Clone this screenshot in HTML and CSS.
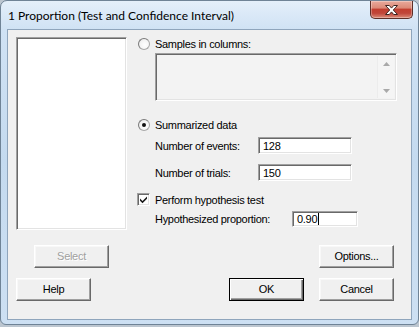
FILE: index.html
```html
<!DOCTYPE html>
<html>
<head>
<meta charset="utf-8">
<link rel="stylesheet" href="styles.css">
</head>
<body>
<div class="window">
  <div class="titlebar">
    <span class="title">1 Proportion (Test and Confidence Interval)</span>
    <div class="close">
      <svg width="17" height="12" viewBox="0 0 17 12"><path d="M2.5 1.5h3.8l2.2 2.6 2.2-2.6h3.8l-4.2 4.5 4.2 4.5h-3.8l-2.2-2.6-2.2 2.6h-3.8l4.2-4.5z" fill="#fff" stroke="#3e2420" stroke-width="1" stroke-linejoin="round"/></svg>
    </div>
  </div>
  <div class="client">
    <div class="main">
      <div class="listbox"></div>
      <div class="options">
        <div class="radio-row"><span class="radio"></span><span>Samples in columns:</span></div>
        <div class="columns-box">
          <div class="scroll">
            <svg class="arrow" width="7" height="4" viewBox="0 0 7 4"><path d="M0 4L3.5 0L7 4z" fill="#a9a9a9"/></svg>
            <svg class="arrow" width="7" height="4" viewBox="0 0 7 4"><path d="M0 0L3.5 4L7 0z" fill="#a9a9a9"/></svg>
          </div>
        </div>
        <div class="radio-row summarized"><span class="radio checked"></span><span>Summarized data</span></div>
        <div class="field-row events"><span class="label w-events">Number of events:</span><span class="input w-num">128</span></div>
        <div class="field-row trials"><span class="label w-events">Number of trials:</span><span class="input w-num">150</span></div>
        <div class="check-row"><span class="checkbox"><svg width="9" height="9" viewBox="0 0 9 9"><path d="M1 3.5L3.5 6L8 1.5V3.8L3.5 8.3L1 5.8z" fill="#1a1a1a"/></svg></span><span>Perform hypothesis test</span></div>
        <div class="field-row hyp"><span class="label w-hyp">Hypothesized proportion:</span><span class="input w-prop">0.90<span class="caret"></span></span></div>
      </div>
    </div>
    <div class="btn-row first">
      <div class="btn disabled">Select</div>
      <div class="btn">Options...</div>
    </div>
    <div class="btn-row second">
      <div class="btn">Help</div>
      <div class="btn default push">OK</div>
      <div class="btn gap">Cancel</div>
    </div>
  </div>
</div>
</body>
</html>
```
FILE: styles.css
```css
html, body {
  margin: 0;
  padding: 0;
}
body {
  width: 419px;
  height: 327px;
  overflow: hidden;
  background: #bcc6d0;
  font-family: "Liberation Sans", Arial, sans-serif;
  font-size: 11px;
  letter-spacing: -0.3px;
  color: #000;
}
.window {
  box-sizing: border-box;
  width: 419px;
  height: 325px;
  border: 1px solid #6f8396;
  border-radius: 7px 7px 6px 6px;
  background: linear-gradient(to bottom, #e4effa 0px, #d0e2f4 28px, #c4daef 160px, #cde0f3 325px);
  display: flex;
  flex-direction: column;
}
.titlebar {
  height: 28px;
  display: flex;
  justify-content: space-between;
  align-items: flex-start;
  padding-left: 7px;
}
.title {
  font-family: Lato, "Liberation Sans", sans-serif;
  font-size: 12px;
  letter-spacing: 0;
  line-height: 15px;
  margin-top: 7px;
  color: #000;
}
.close {
  box-sizing: border-box;
  width: 43px;
  height: 18px;
  margin-right: 5px;
  border: 1px solid #5e2f28;
  border-top: none;
  border-radius: 0 0 5px 5px;
  background: linear-gradient(to bottom, #e9aa9c 0%, #dc8a78 40%, #c23f30 50%, #c0463a 72%, #dc8c78 100%);
  display: flex;
  align-items: center;
  justify-content: center;
  box-shadow: inset 0 0 0 1px rgba(255,255,255,0.3);
}
.client {
  box-sizing: border-box;
  width: 405px;
  height: 291px;
  margin-left: 6px;
  border: 1px solid #8fa5bc;
  background: #f0f0f0;
  padding: 7px 0 0 8px;
}
.main {
  display: flex;
  height: 193px;
}
.listbox {
  box-sizing: border-box;
  width: 111px;
  height: 193px;
  background: #fff;
  border-top: 1px solid #a0a0a0;
  border-left: 1px solid #a0a0a0;
  border-right: 1px solid #fff;
  border-bottom: 1px solid #fff;
  box-shadow: inset 1px 1px 0 #696969, inset -1px -1px 0 #e3e3e3;
}
.options {
  margin-left: 10px;
  display: flex;
  flex-direction: column;
  width: 265px;
}
.radio-row {
  display: flex;
  align-items: center;
  height: 14px;
}
.radio {
  box-sizing: border-box;
  width: 12px;
  height: 12px;
  margin-left: 1px;
  margin-right: 5px;
  border-radius: 50%;
  border: 1px solid #a8a8a8;
  border-top-color: #7a7a7a;
  border-left-color: #7a7a7a;
  background: radial-gradient(circle at 60% 60%, #ffffff 0%, #f4f4f4 55%, #dadada 100%);
  display: flex;
  align-items: center;
  justify-content: center;
}
.radio.checked::after {
  content: "";
  width: 4px;
  height: 4px;
  border-radius: 50%;
  background: #111;
}
.columns-box {
  box-sizing: border-box;
  width: 242px;
  height: 48px;
  margin: 2px 0 0 18px;
  background: #f3f3f3;
  border-top: 1px solid #a0a0a0;
  border-left: 1px solid #a0a0a0;
  border-right: 1px solid #fff;
  border-bottom: 1px solid #fff;
  box-shadow: inset 1px 1px 0 #696969, inset -1px -1px 0 #e3e3e3;
  display: flex;
  justify-content: flex-end;
  padding: 2px;
}
.scroll {
  width: 16px;
  border-left: 1px solid #ececec;
  background: #f5f5f5;
  display: flex;
  flex-direction: column;
  justify-content: space-between;
  align-items: center;
  padding: 6px 0 5px 0;
}
.summarized {
  margin-top: 17px;
}
.field-row {
  display: flex;
  align-items: center;
  padding-left: 18px;
}
.events { margin-top: 5px; height: 17px; }
.trials { margin-top: 10px; height: 17px; }
.hyp { margin-top: 5px; height: 16px; }
.w-events { width: 103px; }
.w-hyp { width: 137px; }
.input {
  box-sizing: border-box;
  height: 100%;
  background: #fff;
  border-top: 1px solid #a0a0a0;
  border-left: 1px solid #a0a0a0;
  border-right: 1px solid #fff;
  border-bottom: 1px solid #fff;
  box-shadow: inset 1px 1px 0 #696969, inset -1px -1px 0 #e3e3e3;
  padding-left: 4px;
  display: flex;
  align-items: center;
}
.w-num { width: 94px; }
.w-prop { width: 66px; }
.caret {
  display: inline-block;
  width: 1px;
  height: 12px;
  background: #000;
  margin-left: 1px;
}
.check-row {
  display: flex;
  align-items: center;
  height: 13px;
  margin-top: 12px;
}
.checkbox {
  box-sizing: border-box;
  width: 13px;
  height: 13px;
  margin-right: 5px;
  background: #fff;
  border-top: 1px solid #a0a0a0;
  border-left: 1px solid #a0a0a0;
  border-right: 1px solid #fff;
  border-bottom: 1px solid #fff;
  box-shadow: inset 1px 1px 0 #696969, inset -1px -1px 0 #e3e3e3;
  display: flex;
  align-items: center;
  justify-content: center;
}
.btn-row {
  display: flex;
}
.btn-row.first {
  margin-top: 15px;
  justify-content: space-between;
  padding: 0 17px 0 18px;
}
.btn-row.second {
  margin-top: 10px;
  padding: 0 17px 0 0;
}
.btn {
  box-sizing: border-box;
  width: 75px;
  height: 23px;
  background: #f0f0f0;
  border-top: 1px solid #fff;
  border-left: 1px solid #fff;
  border-right: 1px solid #696969;
  border-bottom: 1px solid #696969;
  box-shadow: inset -1px -1px 0 #a0a0a0, inset 1px 1px 0 #f8f8f8;
  display: flex;
  align-items: center;
  justify-content: center;
  padding-bottom: 1px;
}
.btn.disabled {
  color: #a0a0a0;
  text-shadow: 1px 1px 0 #fff;
}
.btn.default {
  border: 1px solid #000;
  box-shadow: inset 1px 1px 0 #fff, inset -1px -1px 0 #696969, inset -2px -2px 0 #a0a0a0;
}
.push { margin-left: auto; }
.gap { margin-left: 15px; }
```
